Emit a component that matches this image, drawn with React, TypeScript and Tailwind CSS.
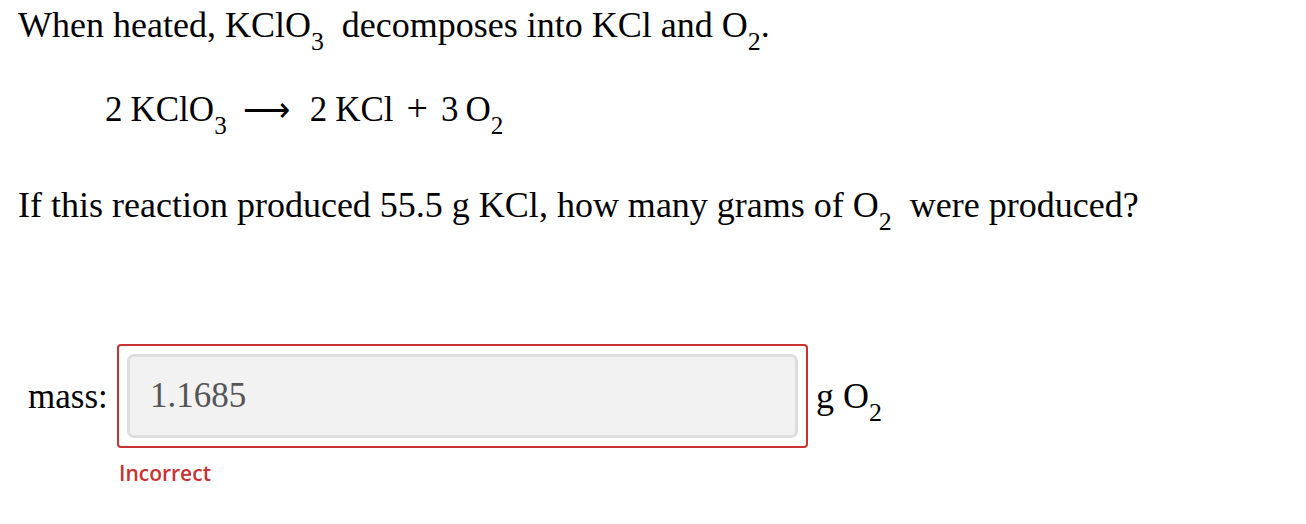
import React from "react";

const serif = { fontFamily: '"Liberation Serif", "Times New Roman", serif' } as const;

function Sub({ children }: { children: React.ReactNode }) {
  return <sub className="relative top-[0.5em] align-baseline text-[0.72em] leading-none">{children}</sub>;
}

export default function App() {
  return (
    <div className="w-[1306px] h-[524px] bg-white text-black" style={serif}>
      <div className="pl-[18px] pt-[3px] text-[36px] leading-[44px]">
        When heated, KClO<Sub>3</Sub>&nbsp; decomposes into KCl and O<Sub>2</Sub>.
      </div>
      <div className="pl-[105px] pt-[41px] text-[35px] leading-[44px] flex items-baseline">
        <span className="mr-[8px]">2</span>
        <span>KClO<Sub>3</Sub></span>
        <span className="ml-[16px] mr-[20px] text-[33px]">⟶</span>
        <span className="mr-[8px]">2</span>
        <span>KCl</span>
        <span className="mx-[13px] text-[38px] leading-none">+</span>
        <span className="mr-[7px]">3</span>
        <span>O<Sub>2</Sub></span>
      </div>
      <div className="pl-[18px] pt-[51px] text-[36px] leading-[44px]">
        If this reaction produced 55.5 g KCl, how many grams of O<Sub>2</Sub>&nbsp; were produced?
      </div>
      <div className="mt-[117px] flex items-center">
        <span className="ml-[28px] w-[89px] text-[35px] leading-none">mass:</span>
        <div className="w-[691px] h-[104px] border-2 border-[#c83232] rounded-[4px] p-[8px]">
          <div className="w-full h-full bg-[#f2f2f2] border-[3px] border-[#dedede] rounded-[7px] flex items-center pl-[20px] text-[35px] text-[#555]">
            1.1685
          </div>
        </div>
        <span className="ml-[8px] text-[36px] leading-none">
          g O<Sub>2</Sub>
        </span>
      </div>
      <div
        className="ml-[119px] mt-[10px] text-[21px] font-semibold text-[#c83232]"
        style={{ fontFamily: '"Open Sans", "Noto Sans", sans-serif' }}
      >
        Incorrect
      </div>
    </div>
  );
}
